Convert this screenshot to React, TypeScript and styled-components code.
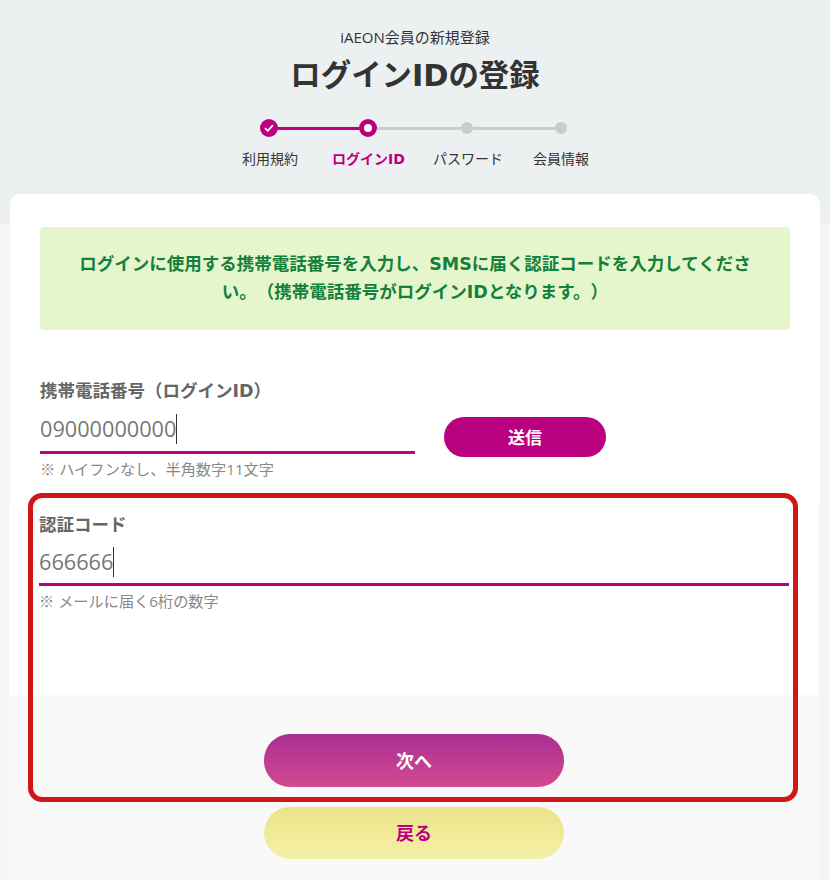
import { FunctionComponent } from "react";
import styled, { createGlobalStyle } from "styled-components";

const boldFont = `"DejaVu Sans", "Noto Sans CJK JP", sans-serif`;

const Global = createGlobalStyle`
  html, body {
    margin: 0;
    padding: 0;
    background: #ecf0f1;
    font-family: "Open Sans", "Noto Sans CJK JP", sans-serif;
    color: #333;
    text-spacing-trim: space-all;
  }
`;

const Page = styled.div`
  position: relative;
  width: 830px;
  height: 880px;
  overflow: hidden;
  background: linear-gradient(#ecf0f1 224px, #f4f6f6 224px);
`;

const Header = styled.header`
  height: 194px;
  display: flex;
  flex-direction: column;
  align-items: center;
  padding-top: 28px;
  box-sizing: border-box;
`;

const SubTitle = styled.div`
  font-size: 15px;
  line-height: 18px;
`;

const Title = styled.h1`
  margin: 9px 0 0;
  font-family: ${boldFont};
  font-size: 30.4px;
  line-height: 42px;
  font-weight: 700;
`;

const Track = styled.div`
  display: flex;
  align-items: center;
  width: 310px;
  margin: 22px 0 0 -1px;
  height: 18px;
`;

const Dot = styled.span<{ $state: "done" | "current" | "todo" }>`
  flex: none;
  box-sizing: border-box;
  display: flex;
  align-items: center;
  justify-content: center;
  border-radius: 50%;
  width: ${(p) => (p.$state === "todo" ? 12 : 18)}px;
  height: ${(p) => (p.$state === "todo" ? 12 : 18)}px;
  background: ${(p) => (p.$state === "todo" ? "#cccccc" : p.$state === "done" ? "#b9007e" : "#fff")};
  border: ${(p) => (p.$state === "current" ? "5px solid #b9007e" : "none")};
`;

const Line = styled.span<{ $on?: boolean; $w: number }>`
  flex: none;
  width: ${(p) => p.$w}px;
  height: 3px;
  background: ${(p) => (p.$on ? "#b9007e" : "#cccccc")};
`;

const Labels = styled.div`
  display: flex;
  margin-top: 12px;
  margin-left: 1px;
  font-size: 14px;
  line-height: 20px;
  gap: 30px;
`;

const Label = styled.span<{ $on?: boolean; $ml?: number }>`
  color: ${(p) => (p.$on ? "#b9007e" : "#333")};
  font-family: ${(p) => (p.$on ? boldFont : "inherit")};
  font-weight: ${(p) => (p.$on ? 700 : 400)};
  margin-left: ${(p) => p.$ml ?? 0}px;
`;

const Card = styled.main`
  width: 810px;
  margin-left: 10px;
  height: 311px;
  box-sizing: border-box;
  padding: 33px 30px 0;
  border-radius: 10px 10px 0 0;
  background: #fff;
`;

const LowerCard = styled.div`
  width: 810px;
  margin-left: 9px;
  background: #fff;
`;

const LowerBody = styled.div`
  height: 190px;
  box-sizing: border-box;
  padding: 9px 30px 0;
`;

const Notice = styled.div`
  background: #e6f6cc;
  border-radius: 4px;
  height: 103px;
  box-sizing: border-box;
  padding: 23px 36px 0;
  color: #13803c;
  font-family: ${boldFont};
  font-size: 17.5px;
  line-height: 28px;
  font-weight: 700;
  text-align: center;
`;

const Field = styled.section`
  margin-top: 50px;
`;

const FieldLabel = styled.div`
  color: #666;
  font-family: ${boldFont};
  font-size: 17.5px;
  line-height: 22px;
  font-weight: 700;
`;

const FieldRow = styled.div`
  display: flex;
  align-items: flex-start;
  height: 52px;
  gap: 29px;
`;

const InputWrap = styled.div<{ $w: number; $h: number }>`
  width: ${(p) => p.$w}px;
  height: ${(p) => p.$h - 2}px;
  margin-top: 5px;
  padding-bottom: 2px;
  border-bottom: 3px solid #b9007e;
  display: flex;
  align-items: center;
  color: #777;
  font-size: 21.7px;
`;

const Caret = styled.span`
  width: 1px;
  height: 30px;
  margin-top: 2px;
  background: #333;
`;

const Hint = styled.div`
  color: #888;
  font-size: 15.2px;
  line-height: 20px;
  margin-top: 5px;
`;

const SendButton = styled.button`
  width: 162px;
  height: 40px;
  margin-top: 15px;
  padding: 0 0 2px;
  border: 0;
  border-radius: 20px;
  background: #b9007e;
  color: #fff;
  font: 700 17px "Open Sans", "Noto Sans CJK JP", sans-serif;
`;

const Footer = styled.div`
  background: #f9f9f9;
  height: 185px;
  display: flex;
  flex-direction: column;
  align-items: center;
  gap: 20px;
  padding-top: 39px;
`;

const BigButton = styled.button<{ $kind: "next" | "back" }>`
  width: 300px;
  height: ${(p) => (p.$kind === "next" ? 53 : 52)}px;
  padding: 0 0 2px;
  border: 0;
  border-radius: 26px;
  font: 700 18px "Open Sans", "Noto Sans CJK JP", sans-serif;
  color: ${(p) => (p.$kind === "next" ? "#fff" : "#b9007e")};
  background: ${(p) =>
    p.$kind === "next"
      ? "linear-gradient(#a92f93, #d44a90)"
      : "linear-gradient(#ebe388, #f5f0a8)"};
`;

const Highlight = styled.div`
  position: absolute;
  left: 28px;
  top: 493px;
  width: 770px;
  height: 309px;
  box-sizing: border-box;
  border: 5px solid #d11616;
  border-radius: 14px;
`;

const Check: FunctionComponent = () => (
  <svg width="10" height="8" viewBox="0 0 10 8">
    <path d="M1 4.2 3.7 6.8 9 1.2" fill="none" stroke="#fff" strokeWidth="1.8" />
  </svg>
);

export default function App() {
  return (
    <Page>
      <Global />
      <Header>
        <SubTitle>iAEON会員の新規登録</SubTitle>
        <Title>ログインIDの登録</Title>
        <Track>
          <Dot $state="done">
            <Check />
          </Dot>
          <Line $on $w={81} />
          <Dot $state="current" />
          <Line $w={84} />
          <Dot $state="todo" />
          <Line $w={82} />
          <Dot $state="todo" />
        </Track>
        <Labels>
          <Label>利用規約</Label>
          <Label $on $ml={4}>ログインID</Label>
          <Label $ml={-2}>パスワード</Label>
          <Label>会員情報</Label>
        </Labels>
      </Header>
      <Card>
        <Notice>
          ログインに使用する携帯電話番号を入力し、SMSに届く認証コードを入力してください。（携帯電話番号がログインIDとなります。）
        </Notice>
        <Field>
          <FieldLabel>携帯電話番号（ログインID）</FieldLabel>
          <FieldRow>
            <InputWrap $w={375} $h={44}>
              09000000000
              <Caret />
            </InputWrap>
            <SendButton>送信</SendButton>
          </FieldRow>
          <Hint>※ ハイフンなし、半角数字11文字</Hint>
        </Field>
      </Card>
      <LowerCard>
        <LowerBody>
          <FieldLabel>認証コード</FieldLabel>
          <InputWrap $w={750} $h={42}>
            666666
            <Caret />
          </InputWrap>
          <Hint>※ メールに届く6桁の数字</Hint>
        </LowerBody>
        <Footer>
          <BigButton $kind="next">次へ</BigButton>
          <BigButton $kind="back">戻る</BigButton>
        </Footer>
      </LowerCard>
      <Highlight />
    </Page>
  );
}
